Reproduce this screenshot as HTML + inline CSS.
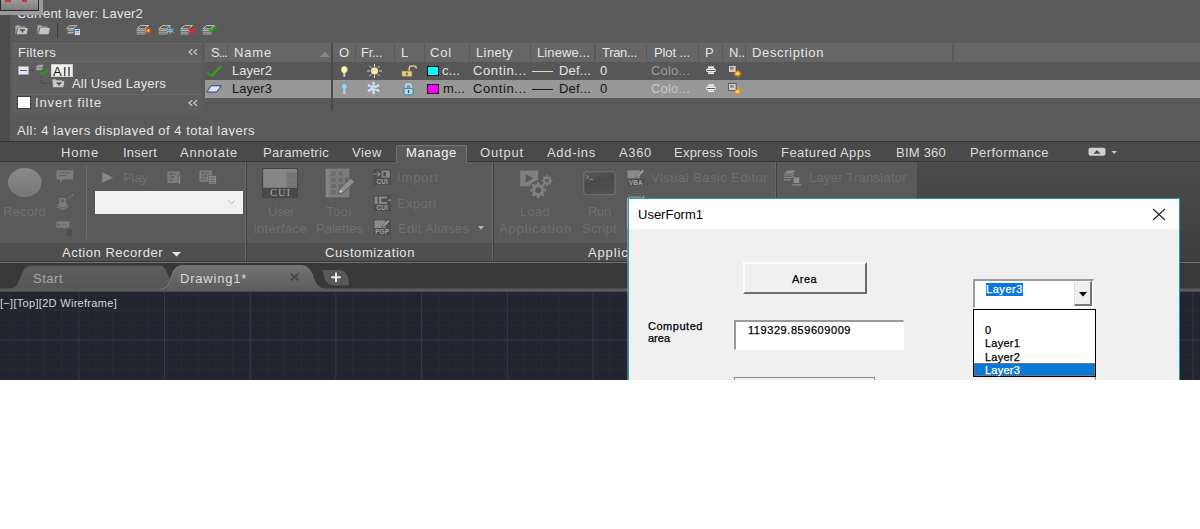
<!DOCTYPE html>
<html><head><meta charset="utf-8"><title>UserForm1</title>
<style>
html,body{margin:0;padding:0;background:#fff;}
body{width:1200px;height:529px;overflow:hidden;position:relative;font-family:"Liberation Sans",sans-serif;}
#shot{position:absolute;left:0;top:0;width:1200px;height:380px;overflow:hidden;background:#5a5a5a;}
.a{position:absolute;}
.t{position:absolute;white-space:nowrap;line-height:1;font-family:"Liberation Sans",sans-serif;}
#dlgt .t{-webkit-text-stroke:0.25px currentColor;}
svg{position:absolute;overflow:visible;}

</style></head><body>
<div id="shot">
<!-- palette -->
<div class="a" style="left:0;top:0;width:10px;height:141px;background:#4c4c4c"></div>
<!-- filters panel -->
<div class="a" style="left:12px;top:43px;width:190px;height:70px;background:#5e5e5e"></div>
<div class="a" style="left:12px;top:43px;width:190px;height:18.5px;background:#606060;box-sizing:border-box;border-top:1px solid #676767;border-bottom:1px solid #686868"></div>
<div class="a" style="left:12px;top:94px;width:190px;height:1px;background:#666"></div>
<!-- grid -->
<div class="a" style="left:205px;top:43px;width:995px;height:18.5px;background:#666"></div>
<div class="a" style="left:205px;top:61.5px;width:995px;height:18.5px;background:#575757"></div>
<div class="a" style="left:205px;top:80px;width:995px;height:18px;background:#979797"></div>
<!-- ribbon -->
<div class="a" style="left:0;top:141px;width:1200px;height:21px;background:#4a4a4a"></div>
<div class="a" style="left:0;top:141px;width:1200px;height:1.2px;background:#323232"></div>
<div class="a" style="left:0;top:160.5px;width:1200px;height:1.2px;background:#383838"></div>
<div class="a" style="left:0;top:162px;width:917px;height:82px;background:#5a5a5a"></div>
<div class="a" style="left:917px;top:161.5px;width:283px;height:100.5px;background:linear-gradient(#4b4b4b,#3e3e3e)"></div>
<div class="a" style="left:0;top:243px;width:917px;height:18px;background:#4f4f4f"></div>
<!-- file tabs -->
<div class="a" style="left:0;top:262px;width:1200px;height:30px;background:#383838"></div>
<!-- drawing -->
<div class="a" style="left:0;top:291.5px;width:1200px;height:88.5px;background:#20252f"></div>
<svg style="left:15px;top:25px" width="13" height="9.5" viewBox="0 0 13 9.5"><path d="M0.4 8.8 V1 Q0.4 0.3 1.2 0.3 H4.4 L5.4 1.4 H10.6 V2.8 H2.2 L1.2 8.8 Z" fill="#a9a9a4"/><path d="M2.7 3 H12.9 L11.6 9.2 H1.7 Z" fill="#c3c3bd"/><path d="M1.5 9 L2.5 3" stroke="#666" stroke-width="0.5" fill="none"/><path d="M4.8 4.3 H10 V5.5 H8.6 L8.2 6 V7.6 H6.6 V6 L6.2 5.5 H4.8 Z" fill="#484848"/></svg>
<svg style="left:37px;top:25px" width="13" height="9.5" viewBox="0 0 13 9.5"><path d="M0.4 8.8 V1 Q0.4 0.3 1.2 0.3 H4.4 L5.4 1.4 H10.6 V2.8 H2.2 L1.2 8.8 Z" fill="#a9a9a4"/><path d="M2.7 3 H12.9 L11.6 9.2 H1.7 Z" fill="#c3c3bd"/><path d="M1.5 9 L2.5 3" stroke="#666" stroke-width="0.5" fill="none"/></svg>
<div class="a" style="left:57.2px;top:22.7px;width:1.2px;height:15px;background:#3a3a3a"></div>
<svg style="left:66px;top:25px" width="15" height="11" viewBox="0 0 15 11"><path d="M3.5 0.6 H11 L8 3.4 H0.5 Z" fill="#6a6a6a" stroke="#bdbdbd" stroke-width="0.9"/><path d="M2.6 4.2 H8.5 L7 5.8 H0.8 Z" fill="#b5b5b5"/><path d="M2.6 6.8 H8.5 L7 8.6 H0.8 Z" fill="#b5b5b5"/><rect x="8.3" y="3.6" width="6.2" height="7" rx="0.6" fill="#f4f6fa" stroke="#3a4560" stroke-width="0.8"/><rect x="9.3" y="4.8" width="4.2" height="1.5" fill="#2f6fd0"/><rect x="9.3" y="7.2" width="4.2" height="1.2" fill="#9aa4b8"/><rect x="9.3" y="8.8" width="4.2" height="0.8" fill="#b8c0d0"/></svg>
<svg style="left:136px;top:25px" width="17" height="11" viewBox="0 0 17 11"><path d="M4.6 0.6 H12.4 L8.6 3.8 H0.8 Z" fill="#585858" stroke="#d2d2d2" stroke-width="0.9" stroke-linejoin="round"/><path d="M0.6 5.4 H8.6 L10 4.2" fill="none" stroke="#c8c8c8" stroke-width="0.9"/><path d="M0.6 7.2 H8.6 L10 6" fill="none" stroke="#c0c0c0" stroke-width="0.9"/><path d="M0.6 9 H8.6 L10 7.8" fill="none" stroke="#b4b4b4" stroke-width="0.9"/><g transform="translate(12.3,5.6)"><path d="M0 -3.3 L0.9 -1.5 L2.6 -2.4 L2 -0.6 L3.5 0 L2 0.7 L2.6 2.4 L0.9 1.6 L0 3.3 L-0.9 1.6 L-2.6 2.4 L-2 0.7 L-3.5 0 L-2 -0.6 L-2.6 -2.4 L-0.9 -1.5 Z" fill="#e2590c"/><circle r="1.3" fill="#f6c23a"/></g></svg>
<svg style="left:158.3px;top:25px" width="17" height="11" viewBox="0 0 17 11"><path d="M4.6 0.6 H12.4 L8.6 3.8 H0.8 Z" fill="#585858" stroke="#d2d2d2" stroke-width="0.9" stroke-linejoin="round"/><path d="M0.6 5.4 H8.6 L10 4.2" fill="none" stroke="#c8c8c8" stroke-width="0.9"/><path d="M0.6 7.2 H8.6 L10 6" fill="none" stroke="#c0c0c0" stroke-width="0.9"/><path d="M0.6 9 H8.6 L10 7.8" fill="none" stroke="#b4b4b4" stroke-width="0.9"/><g transform="translate(12.2,5.6)" stroke="#6fc3e3" stroke-width="1.1" stroke-linecap="round"><path d="M0 -3.2 V3.2 M-3 -1.7 L3 1.7 M-3 1.7 L3 -1.7"/></g></svg>
<svg style="left:180.3px;top:25px" width="17" height="11" viewBox="0 0 17 11"><path d="M4.6 0.6 H12.4 L8.6 3.8 H0.8 Z" fill="#585858" stroke="#d2d2d2" stroke-width="0.9" stroke-linejoin="round"/><path d="M0.6 5.4 H8.6 L10 4.2" fill="none" stroke="#c8c8c8" stroke-width="0.9"/><path d="M0.6 7.2 H8.6 L10 6" fill="none" stroke="#c0c0c0" stroke-width="0.9"/><path d="M0.6 9 H8.6 L10 7.8" fill="none" stroke="#b4b4b4" stroke-width="0.9"/><path d="M8.6 3.2 L15.2 8.4 M15.2 3.2 L8.6 8.4" stroke="#e8282e" stroke-width="1.9"/></svg>
<svg style="left:202px;top:25px" width="17" height="11" viewBox="0 0 17 11"><path d="M4.6 0.6 H12.4 L8.6 3.8 H0.8 Z" fill="#585858" stroke="#d2d2d2" stroke-width="0.9" stroke-linejoin="round"/><path d="M0.6 5.4 H8.6 L10 4.2" fill="none" stroke="#c8c8c8" stroke-width="0.9"/><path d="M0.6 7.2 H8.6 L10 6" fill="none" stroke="#c0c0c0" stroke-width="0.9"/><path d="M0.6 9 H8.6 L10 7.8" fill="none" stroke="#b4b4b4" stroke-width="0.9"/><path d="M7 4 L9.6 6.4 L14.6 0.6" stroke="#1fa30f" stroke-width="2" fill="none" stroke-linejoin="miter"/></svg>
<svg style="left:188px;top:48.5px" width="10" height="6" viewBox="0 0 10 6"><path d="M4.2 0.3 L1 3 L4.2 5.7 M9 0.3 L5.8 3 L9 5.7" fill="none" stroke="#c8c8c8" stroke-width="1.2"/></svg>
<svg style="left:188px;top:100px" width="10" height="6" viewBox="0 0 10 6"><path d="M4.2 0.3 L1 3 L4.2 5.7 M9 0.3 L5.8 3 L9 5.7" fill="none" stroke="#c8c8c8" stroke-width="1.2"/></svg>
<div class="a" style="left:18px;top:66.3px;width:11px;height:8.7px;background:#e6e6e6;box-sizing:border-box;border:1px solid #a4a4a4"></div>
<div class="a" style="left:20.3px;top:70px;width:6.6px;height:1.2px;background:#3f5fc4"></div>
<svg style="left:29px;top:64px" width="25" height="22" viewBox="0 0 25 22"><path d="M0.5 6.6 H5" stroke="#3c3c3c" stroke-width="1" stroke-dasharray="1 1" fill="none"/><path d="M12.3 12 V19 H23" stroke="#3c3c3c" stroke-width="1" stroke-dasharray="1 1" fill="none"/><path d="M9.4 1.3 H14.2 L12.2 3 H7.4 Z" fill="#7a7a7a" stroke="#d0d0d0" stroke-width="0.7"/><path d="M7.2 4.2 H12.4 L13.6 3.2 M7.2 5.6 H12.4 L13.6 4.6" stroke="#c4c4c4" stroke-width="0.8" fill="none"/><path d="M11 8.2 L13.4 10.6 L19.4 5.6" stroke="#1fa30f" stroke-width="1.8" fill="none"/></svg>
<div class="a" style="left:51px;top:63.8px;width:22.2px;height:13px;background:#f0f0f0;box-sizing:border-box;border:1px solid #cfcfcf"></div>
<svg style="left:52.3px;top:78.6px" width="12.6" height="8.4" viewBox="0 0 12.6 8.4"><path d="M0.4 1.8 V0.9 Q0.4 0.3 1 0.3 H4 L4.9 1.2 H10.2 V2.2 H12.2 L11 8 H1.1 Z" fill="#bdbdbd"/><path d="M2 2.6 H12.4 L11.2 8.2 H1.2 Z" fill="#cacaca"/><path d="M4.4 3.6 H9.6 V4.3 L7.7 5.3 V6.6 H6.3 V5.3 L4.4 4.3 Z" fill="#404040"/></svg>
<div class="a" style="left:16.5px;top:96.3px;width:14.5px;height:12.8px;background:#fff;box-sizing:border-box;border:1px solid #404040"></div>
<div class="a" style="left:226.9px;top:43.5px;width:1.2px;height:18px;background:#595959"></div>
<div class="a" style="left:355.0px;top:43.5px;width:1.2px;height:18px;background:#595959"></div>
<div class="a" style="left:394.0px;top:43.5px;width:1.2px;height:18px;background:#595959"></div>
<div class="a" style="left:423.79999999999995px;top:43.5px;width:1.2px;height:18px;background:#595959"></div>
<div class="a" style="left:468.79999999999995px;top:43.5px;width:1.2px;height:18px;background:#595959"></div>
<div class="a" style="left:530.1999999999999px;top:43.5px;width:1.2px;height:18px;background:#595959"></div>
<div class="a" style="left:594.4px;top:43.5px;width:1.2px;height:18px;background:#595959"></div>
<div class="a" style="left:646.0px;top:43.5px;width:1.2px;height:18px;background:#595959"></div>
<div class="a" style="left:697.6999999999999px;top:43.5px;width:1.2px;height:18px;background:#595959"></div>
<div class="a" style="left:721.9px;top:43.5px;width:1.2px;height:18px;background:#595959"></div>
<div class="a" style="left:744.9px;top:43.5px;width:1.2px;height:18px;background:#595959"></div>
<div class="a" style="left:952.4px;top:43.5px;width:1.2px;height:18px;background:#595959"></div>
<div class="a" style="left:331px;top:43px;width:2px;height:68px;background:#4a4a4a"></div>
<svg style="left:320px;top:50.5px" width="10" height="6" viewBox="0 0 10 6"><path d="M0 6 L5 0.5 L10 6 Z" fill="#8a8a8a"/></svg>
<svg style="left:205.5px;top:64.5px" width="16" height="13" viewBox="0 0 16 13"><path d="M1 7.6 L5.4 11.2 L15 1.6" stroke="#37a516" stroke-width="2.1" fill="none"/><path d="M1.2 8.6 L5.5 12" stroke="#1e6a0c" stroke-width="0.8" fill="none"/></svg>
<svg style="left:205.5px;top:84.5px" width="16" height="8" viewBox="0 0 16 8"><path d="M5.2 0.8 H15.2 L10.6 7 H0.8 Z" fill="#dfe7f6" stroke="#263f86" stroke-width="1"/></svg>
<svg style="left:340.8px;top:65.8px" width="6.6" height="11" viewBox="0 0 6.6 11"><ellipse cx="3.3" cy="3.6" rx="3" ry="3.4" fill="#fdfbb0" stroke="#c9c27a" stroke-width="0.5"/><path d="M2.3 6.6 H4.3 V10.6 H2.3 Z" fill="#e8e8e0"/><path d="M2.3 8.6 H4.3" stroke="#8a8a80" stroke-width="0.6"/></svg>
<svg style="left:340.5px;top:83px" width="6.6" height="11" viewBox="0 0 6.6 11"><ellipse cx="3.3" cy="3.6" rx="3" ry="3.4" fill="#9ecdea" stroke="#4a7fa6" stroke-width="0.6"/><path d="M2.3 6.6 H4.3 V10.6 H2.3 Z" fill="#e4ecf2"/><path d="M2.3 8.6 H4.3" stroke="#6a7a86" stroke-width="0.6"/></svg>
<svg style="left:366.5px;top:63.5px" width="15" height="14" viewBox="0 0 15 14"><g transform="translate(7.5,7)"><g stroke="#ecebe0" stroke-width="0.9" stroke-linecap="round"><path d="M0 -6.6 V-4.6 M0 6.6 V4.6 M-7 0 H-5 M7 0 H5 M-4.9 -4.9 L-3.5 -3.5 M4.9 4.9 L3.5 3.5 M-4.9 4.9 L-3.5 3.5 M4.9 -4.9 L3.5 -3.5"/></g><circle r="3.3" fill="#f7e6a8" stroke="#f4f0d8" stroke-width="0.6"/></g></svg>
<svg style="left:367.3px;top:82.2px" width="13" height="12" viewBox="0 0 13 12"><g transform="translate(6.5,6)" stroke="#e6f3fc" stroke-width="2.1" stroke-linecap="round"><path d="M0 -5.2 V5.2 M-4.8 -2.7 L4.8 2.7 M-4.8 2.7 L4.8 -2.7"/></g><g transform="translate(6.5,6)" stroke="#8ec4e6" stroke-width="0.6"><path d="M0 -5 V5 M-4.6 -2.6 L4.6 2.6 M-4.6 2.6 L4.6 -2.6"/></g></svg>
<svg style="left:401px;top:64.5px" width="17" height="12" viewBox="0 0 17 12"><path d="M8.2 6 V3.2 Q8.2 1 10.9 1 H12.6 Q15.4 1 15.4 3.4" fill="none" stroke="#d9c48a" stroke-width="1.5"/><rect x="0.8" y="6" width="10.2" height="5.4" rx="0.8" fill="#e3cd8f" stroke="#8a7338" stroke-width="0.7"/><rect x="5.2" y="7.4" width="1.3" height="2.8" fill="#5e4d22"/></svg>
<svg style="left:403px;top:82.9px" width="11" height="12.6" viewBox="0 0 11 13.4"><path d="M2.6 6 V3.8 Q2.6 1 5.5 1 Q8.4 1 8.4 3.8 V6" fill="none" stroke="#bfe2f2" stroke-width="1.6"/><rect x="0.7" y="5.8" width="9.6" height="6.8" rx="0.9" fill="#aedaee" stroke="#2f6f92" stroke-width="0.8"/><rect x="4.9" y="7.6" width="1.3" height="3.2" fill="#1e4f6e"/></svg>
<div class="a" style="left:427px;top:66px;width:11.8px;height:10.2px;background:#00ffff;box-sizing:border-box;border:1px solid #111"></div>
<div class="a" style="left:427px;top:84px;width:11.8px;height:10.2px;background:#ff00ff;box-sizing:border-box;border:1px solid #111"></div>
<div class="a" style="left:532px;top:71.3px;width:21px;height:1.2px;background:#dcdcdc"></div>
<div class="a" style="left:532px;top:89.3px;width:21px;height:1.2px;background:#1c1c1c"></div>
<svg style="left:705.5px;top:65.7px" width="10" height="8.4" viewBox="0 0 10 8.4"><rect x="2" y="0.3" width="6" height="2" fill="#e8e8e8"/><rect x="0.3" y="2.4" width="9.4" height="3.6" rx="1" fill="#f2f2f2"/><rect x="1" y="4" width="8" height="0.9" fill="#4a4a4a"/><rect x="2" y="6.2" width="6" height="1.9" fill="#e0e0e0"/></svg>
<svg style="left:705.5px;top:83.7px" width="10" height="8.4" viewBox="0 0 10 8.4"><rect x="2" y="0.3" width="6" height="2" fill="#e8e8e8"/><rect x="0.3" y="2.4" width="9.4" height="3.6" rx="1" fill="#f2f2f2"/><rect x="1" y="4" width="8" height="0.9" fill="#4a4a4a"/><rect x="2" y="6.2" width="6" height="1.9" fill="#e0e0e0"/></svg>
<svg style="left:728px;top:64.5px" width="14" height="13" viewBox="0 0 14 13"><rect x="0.5" y="0.5" width="7.6" height="7" fill="#d0d0d0" stroke="#4a4a4a" stroke-width="0.8"/><rect x="2" y="2" width="3.6" height="2.8" fill="#8a8a8a"/><g transform="translate(9.6,8.6)"><path d="M0 -4 L1 -1.9 L3 -2.9 L2.3 -0.8 L4.2 0 L2.3 0.9 L3 3 L1 2 L0 4 L-1 2 L-3 3 L-2.3 0.9 L-4.2 0 L-2.3 -0.8 L-3 -2.9 L-1 -1.9 Z" fill="#f39a12"/><circle r="1.7" fill="#fbd04a"/></g></svg>
<svg style="left:728px;top:82.5px" width="14" height="13" viewBox="0 0 14 13"><rect x="0.5" y="0.5" width="7.6" height="7" fill="#d0d0d0" stroke="#4a4a4a" stroke-width="0.8"/><rect x="2" y="2" width="3.6" height="2.8" fill="#8a8a8a"/><g transform="translate(9.6,8.6)"><path d="M0 -4 L1 -1.9 L3 -2.9 L2.3 -0.8 L4.2 0 L2.3 0.9 L3 3 L1 2 L0 4 L-1 2 L-3 3 L-2.3 0.9 L-4.2 0 L-2.3 -0.8 L-3 -2.9 L-1 -1.9 Z" fill="#f39a12"/><circle r="1.7" fill="#fbd04a"/></g></svg>
<div class="a" style="left:395.5px;top:144.5px;width:71px;height:18px;background:#5a5a5a;box-sizing:border-box;border:1px solid #747474;border-bottom:none;border-radius:2px 2px 0 0"></div>
<div class="a" style="left:245.3px;top:162px;width:1px;height:98.5px;background:#686868"></div>
<div class="a" style="left:246.3px;top:162px;width:1px;height:98.5px;background:#404040"></div>
<div class="a" style="left:492.2px;top:162px;width:1px;height:98.5px;background:#686868"></div>
<div class="a" style="left:493.2px;top:162px;width:1px;height:98.5px;background:#404040"></div>
<div class="a" style="left:775.4px;top:162px;width:1px;height:98.5px;background:#686868"></div>
<div class="a" style="left:776.4px;top:162px;width:1px;height:98.5px;background:#404040"></div>
<svg style="left:1088px;top:147px" width="30" height="10" viewBox="0 0 30 10"><rect x="0.5" y="0.8" width="17" height="8" rx="2" fill="#cfcfcf"/><path d="M5.4 6.8 L9 3 L12.6 6.8 Z" fill="#484848"/><path d="M23.5 4 H29 L26.2 7 Z" fill="#c4c4c4"/></svg>
<svg style="left:8px;top:168px" width="33.5" height="29" viewBox="0 0 33.5 29"><defs><linearGradient id="rg" x1="0" y1="0" x2="0" y2="1"><stop offset="0" stop-color="#8a8a8a"/><stop offset="1" stop-color="#777"/></linearGradient></defs><ellipse cx="16.75" cy="14.5" rx="16.75" ry="14.5" fill="url(#rg)"/></svg>
<svg style="left:56px;top:170px" width="18" height="14" viewBox="0 0 18 14"><path d="M0.5 0.3 H17.2 V9.4 H7 L4.2 13 V9.4 H0.5 Z" fill="#7e7e7e"/><path d="M2.6 3 H14.6 M2.6 5.6 H10.4" stroke="#5e5e5e" stroke-width="1"/></svg>
<svg style="left:56px;top:194px" width="19" height="17" viewBox="0 0 19 17"><path d="M1 11 L6.6 8.6 L12.4 11 L6.6 13.6 Z" fill="#7e7e7e"/><path d="M1 11.6 V13.6 L6.6 16.2 L12.4 13.6 V11.6 L6.6 14.2 Z" fill="#767676"/><path d="M3.4 4 H10 V10 H3.4 Z" fill="#7c7c7c"/><path d="M5 5.4 H8.4 V8 H5 Z" fill="#5a5a5a"/><path d="M11.4 5.6 L15.6 1.4" stroke="#727272" stroke-width="1"/><circle cx="16.4" cy="1" r="0.9" fill="#7a7a7a"/></svg>
<svg style="left:56px;top:220.5px" width="17" height="16" viewBox="0 0 17 16"><path d="M0.4 0.6 H13.2 V6.8 H9 L7.6 8.6 V6.8 H0.4 Z" fill="#7e7e7e"/><path d="M2 2.4 L4.4 3.8 L2 5.2 Z" fill="#5a5a5a"/><path d="M5.4 3.8 H11" stroke="#6a6a6a" stroke-width="1"/><rect x="10.4" y="8" width="5.6" height="7.4" fill="#4e4e4e"/></svg>
<div class="a" style="left:86px;top:165px;width:1.2px;height:74px;background:#6c6c6c"></div>
<svg style="left:102px;top:172px" width="11.5" height="11" viewBox="0 0 11.5 11"><path d="M0.3 0.3 L11.2 5.5 L0.3 10.7 Z" fill="#878787"/></svg>
<svg style="left:167px;top:171px" width="16" height="13.5" viewBox="0 0 16 13.5"><rect x="0.4" y="0.4" width="12.4" height="11.6" fill="#7e7e7e"/><path d="M2 3 H9 M2 6 H7 M2 9 H6" stroke="#5a5a5a" stroke-width="1"/><circle cx="4" cy="3" r="1" fill="#5a5a5a"/><circle cx="6" cy="6" r="1" fill="#5a5a5a"/><path d="M11.4 3.4 Q9.4 5.4 11.4 7 V13 H13.4 V7 Q15.4 5.4 13.4 3.4 V5.6 H11.4 Z" fill="#8c8c8c" stroke="#5a5a5a" stroke-width="0.5"/></svg>
<svg style="left:198.7px;top:170px" width="18" height="14.5" viewBox="0 0 18 14.5"><rect x="0.4" y="0.4" width="12.6" height="11.4" fill="#7e7e7e"/><path d="M2 3 H10 M2 6 H8 M2 9 H7" stroke="#5a5a5a" stroke-width="1"/><circle cx="4" cy="3" r="1" fill="#5a5a5a"/><circle cx="6.5" cy="6" r="1" fill="#5a5a5a"/><rect x="9.8" y="5.6" width="7.6" height="8.4" fill="#8c8c8c" stroke="#5a5a5a" stroke-width="0.7"/><path d="M11.2 8 H16 M11.2 10.4 H16 M11.2 12.4 H16" stroke="#5e5e5e" stroke-width="0.9"/></svg>
<div class="a" style="left:94.7px;top:190.8px;width:148.7px;height:23px;background:#f1f1f1"></div>
<svg style="left:227.5px;top:200px" width="7" height="4.5" viewBox="0 0 7 4.5"><path d="M0.4 0.4 L3.5 3.8 L6.6 0.4" fill="none" stroke="#b4b4b4" stroke-width="1"/></svg>
<svg style="left:172px;top:251.5px" width="9" height="5" viewBox="0 0 9 5"><path d="M0 0 H9 L4.5 4.6 Z" fill="#e4e4e4"/></svg>
<svg style="left:262.3px;top:167.7px" width="36" height="30" viewBox="0 0 36 30"><rect x="0.5" y="0.5" width="35" height="29" rx="1" fill="#7e7e7e" stroke="#474747" stroke-width="1.2"/><rect x="1.4" y="1.4" width="33.2" height="2.2" fill="#8a8a8a"/><rect x="1.8" y="4.2" width="22" height="15.4" fill="#868686"/><rect x="25" y="4.2" width="9.4" height="7" fill="#767676"/><rect x="25" y="12.2" width="9.4" height="7.4" fill="#767676"/><rect x="1" y="19.8" width="34" height="9.4" fill="#494949"/><text x="18.4" y="28.4" text-anchor="middle" font-family="Liberation Serif,serif" font-size="10.6" fill="#a6a6a6" letter-spacing="0.9">CUI</text></svg>
<svg style="left:325.3px;top:167.7px" width="30" height="30" viewBox="0 0 30 30"><rect x="0.5" y="0.5" width="24" height="29" fill="#7c7c7c" stroke="#676767" stroke-width="1"/><rect x="1" y="1" width="3" height="28" fill="#858585"/><rect x="6.2" y="3.6" width="4.4" height="4" fill="#6a6a6a"/><rect x="6.2" y="9.8" width="4.4" height="4" fill="#6a6a6a"/><rect x="6.2" y="16" width="4.4" height="4" fill="#6a6a6a"/><rect x="6.2" y="22.2" width="4.4" height="4" fill="#6a6a6a"/><rect x="13.4" y="3.6" width="4.4" height="4" fill="#6a6a6a"/><rect x="13.4" y="9.8" width="4.4" height="4" fill="#6a6a6a"/><rect x="13.4" y="16" width="4.4" height="4" fill="#6a6a6a"/><rect x="13.4" y="22.2" width="4.4" height="4" fill="#6a6a6a"/><rect x="20" y="9.4" width="3" height="5" fill="#646464"/><path d="M13.6 25.6 L14.8 20.4 L25.8 10.2 L29.6 14 L18.6 24.2 Z" fill="#8e8e8e" stroke="#5c5c5c" stroke-width="1"/><circle cx="15.8" cy="23.2" r="1.5" fill="#c4c4c4"/></svg>
<svg style="left:372.7px;top:169px" width="18.5" height="16.5" viewBox="0 0 18.5 16.5"><rect x="0.4" y="0.4" width="17.6" height="15.6" fill="#4e4e4e"/><rect x="8.6" y="1.6" width="8.2" height="7" fill="#8a8a8a"/><path d="M0 5 H6.4 M4.4 2.6 L7 5 L4.4 7.4" stroke="#8c8c8c" stroke-width="1.1" fill="none"/><rect x="10.4" y="3" width="2.4" height="4.4" fill="#4e4e4e"/><text x="9.2" y="15.2" text-anchor="middle" font-family="Liberation Sans,sans-serif" font-weight="bold" font-size="6.4" fill="#a2a2a2" letter-spacing="0.2">CUI</text></svg>
<svg style="left:372.7px;top:194.5px" width="18.5" height="16.5" viewBox="0 0 18.5 16.5"><rect x="0.4" y="0.4" width="17.6" height="15.6" fill="#4e4e4e"/><rect x="1.6" y="1.6" width="3" height="7.4" fill="#8a8a8a"/><path d="M6 1.6 H14 V3.6 H8.2 V7 H14 V9 H6 Z" fill="#8a8a8a"/><path d="M14.6 5.2 H18 " stroke="#8c8c8c" stroke-width="1.1"/><circle cx="17" cy="5.2" r="1" fill="#8a8a8a"/><text x="9.2" y="15.2" text-anchor="middle" font-family="Liberation Sans,sans-serif" font-weight="bold" font-size="6.4" fill="#a2a2a2" letter-spacing="0.2">CUI</text></svg>
<svg style="left:372.7px;top:219.4px" width="18.5" height="16.5" viewBox="0 0 18.5 16.5"><rect x="0.4" y="0.4" width="17.6" height="15.6" fill="#4e4e4e"/><rect x="1.4" y="1.4" width="11" height="7.6" fill="#8a8a8a"/><path d="M8.6 8.2 L10 5.6 L15 0.8 L16.8 2.6 L11.6 7.4 Z" fill="#9a9a9a" stroke="#4e4e4e" stroke-width="0.6"/><text x="9.2" y="15.2" text-anchor="middle" font-family="Liberation Sans,sans-serif" font-weight="bold" font-size="6.4" fill="#a2a2a2" letter-spacing="0.2">PGP</text></svg>
<svg style="left:478px;top:225.5px" width="6" height="4" viewBox="0 0 6 4"><path d="M0 0 H6 L3 3.6 Z" fill="#b8b8b8"/></svg>
<svg style="left:520px;top:169.5px" width="36" height="30" viewBox="0 0 36 30"><rect x="0.2" y="0.6" width="18" height="15.6" fill="#808080"/><path d="M5.6 4 L13.2 8.4 L5.6 12.8 Z" fill="#585858"/><circle cx="18.2" cy="20.2" r="9.6" fill="#5a5a5a"/><circle cx="27" cy="10.6" r="6.8" fill="#5a5a5a"/><path d="M26.35 19.30 L26.35 21.10 L23.96 21.87 L23.46 23.09 L24.60 25.33 L23.33 26.60 L21.09 25.46 L19.87 25.96 L19.10 28.35 L17.30 28.35 L16.53 25.96 L15.31 25.46 L13.07 26.60 L11.80 25.33 L12.94 23.09 L12.44 21.87 L10.05 21.10 L10.05 19.30 L12.44 18.53 L12.94 17.31 L11.80 15.07 L13.07 13.80 L15.31 14.94 L16.53 14.44 L17.30 12.05 L19.10 12.05 L19.87 14.44 L21.09 14.94 L23.33 13.80 L24.60 15.07 L23.46 17.31 L23.96 18.53 Z" fill="#7f7f7f"/><circle cx="18.2" cy="20.2" r="3" fill="#5a5a5a"/><path d="M32.57 9.99 L32.57 11.21 L30.84 11.72 L30.51 12.53 L31.37 14.10 L30.50 14.97 L28.93 14.11 L28.12 14.44 L27.61 16.17 L26.39 16.17 L25.88 14.44 L25.07 14.11 L23.50 14.97 L22.63 14.10 L23.49 12.53 L23.16 11.72 L21.43 11.21 L21.43 9.99 L23.16 9.48 L23.49 8.67 L22.63 7.10 L23.50 6.23 L25.07 7.09 L25.88 6.76 L26.39 5.03 L27.61 5.03 L28.12 6.76 L28.93 7.09 L30.50 6.23 L31.37 7.10 L30.51 8.67 L30.84 9.48 Z" fill="#7f7f7f"/><circle cx="27" cy="10.6" r="1.9" fill="#5a5a5a"/></svg>
<svg style="left:583px;top:171px" width="33" height="24.5" viewBox="0 0 33 24.5"><defs><linearGradient id="sg" x1="0" y1="0" x2="0.4" y2="1"><stop offset="0" stop-color="#5c5c5c"/><stop offset="0.5" stop-color="#4a4a4a"/><stop offset="1" stop-color="#505050"/></linearGradient></defs><rect x="0.7" y="0.7" width="31.4" height="23" rx="3" fill="url(#sg)" stroke="#6e6e6e" stroke-width="1.3"/><path d="M3.2 4.4 L5.8 6 L3.2 7.6 M6.6 8.4 H10" stroke="#8c8c8c" stroke-width="1" fill="none"/></svg>
<svg style="left:627.3px;top:169px" width="18.5" height="16.5" viewBox="0 0 18.5 16.5"><rect x="0.4" y="1.4" width="12.6" height="8" fill="#8a8a8a"/><path d="M8.6 8.6 L10 5.8 L15.4 0.6 L17.2 2.4 L11.8 7.6 Z" fill="#9a9a9a" stroke="#5a5a5a" stroke-width="0.6"/><rect x="0.4" y="9.8" width="17" height="6.4" fill="#4e4e4e"/><text x="8.9" y="15.6" text-anchor="middle" font-family="Liberation Sans,sans-serif" font-weight="bold" font-size="6.4" fill="#a2a2a2" letter-spacing="0.2">VBA</text></svg>
<svg style="left:628px;top:194.8px" width="18.5" height="16.5" viewBox="0 0 18.5 16.5"><rect x="0.4" y="1.4" width="12.6" height="8" fill="#8a8a8a"/><path d="M8.6 8.6 L10 5.8 L15.4 0.6 L17.2 2.4 L11.8 7.6 Z" fill="#9a9a9a" stroke="#5a5a5a" stroke-width="0.6"/><rect x="0.4" y="9.8" width="17" height="6.4" fill="#4e4e4e"/><text x="8.9" y="15.6" text-anchor="middle" font-family="Liberation Sans,sans-serif" font-weight="bold" font-size="6.4" fill="#a2a2a2" letter-spacing="0.2">VBA</text></svg>
<svg style="left:783px;top:169.5px" width="20" height="16" viewBox="0 0 20 16"><path d="M4.6 0.6 H12.6 L9.4 3.4 H1.4 Z" fill="#8a8a8a"/><path d="M1 5 H9.4 L11 3.8 M1 7.4 H9.4 L11 6.2 M1 9.8 H8" stroke="#8a8a8a" stroke-width="1.2" fill="none"/><rect x="10.6" y="7.4" width="5.6" height="5.6" fill="#8c8c8c"/><path d="M9.4 14.8 H18.6" stroke="#8a8a8a" stroke-width="1.2"/></svg>
<div class="a" style="left:0;top:260.5px;width:1200px;height:1.3px;background:#3a3a3a"></div>
<div class="a" style="left:0;top:261.8px;width:1200px;height:1.2px;background:#727272"></div>
<svg style="left:0px;top:262px" width="1200" height="30" viewBox="0 0 1200 30"><defs><linearGradient id="tg" x1="0" y1="0" x2="0" y2="1"><stop offset="0" stop-color="#747474"/><stop offset="1" stop-color="#5c5c5c"/></linearGradient><linearGradient id="tg2" x1="0" y1="0" x2="0" y2="1"><stop offset="0" stop-color="#5e5e5e"/><stop offset="1" stop-color="#565656"/></linearGradient></defs><rect x="0" y="26.4" width="1200" height="3.2" fill="#5a5a5a"/><path d="M0 27 L6 27 C16 27 18 22 21 14 C24 6 26 3.6 34 3.6 L158 3.6 C165 3.6 166 8 168.5 14 C171 21 173 27 180 27 Z" fill="url(#tg2)"/><path d="M160 27 C168 27 169 21 171.5 14 C174 7 176 3.6 184 3.6 L300 3.6 C308 3.6 310 8 313 14 C316 21 318 27 328 27 Z" fill="url(#tg)"/><path d="M160 27 C168 27 169 21 171.5 14 C174 7 176 3.6 184 3.6 L300 3.6 C308 3.6 310 8 313 14" fill="none" stroke="#7e7e7e" stroke-width="0.8"/><path d="M322.5 8 L338 8 C346 8 349 14 349 23.4 L334 23.4 C326 23.4 324 16 322.5 8 Z" fill="#595959"/><path d="M336 10.6 V20 M331.2 15.3 H340.8" stroke="#ececec" stroke-width="2"/><path d="M290.6 11.6 L298.6 18.4 M298.6 11.6 L290.6 18.4" stroke="#444" stroke-width="1.8"/></svg>
<svg style="left:0px;top:291.5px" width="1200" height="88.5" viewBox="0 0 1200 88.5"><path d="M10.2 0 V89" stroke="#272c37" stroke-width="1"/><path d="M27.4 0 V89" stroke="#272c37" stroke-width="1"/><path d="M44.5 0 V89" stroke="#272c37" stroke-width="1"/><path d="M61.7 0 V89" stroke="#272c37" stroke-width="1"/><path d="M78.8 0 V89" stroke="#333a48" stroke-width="1"/><path d="M95.9 0 V89" stroke="#272c37" stroke-width="1"/><path d="M113.1 0 V89" stroke="#272c37" stroke-width="1"/><path d="M130.2 0 V89" stroke="#272c37" stroke-width="1"/><path d="M147.4 0 V89" stroke="#272c37" stroke-width="1"/><path d="M164.5 0 V89" stroke="#333a48" stroke-width="1"/><path d="M181.6 0 V89" stroke="#272c37" stroke-width="1"/><path d="M198.8 0 V89" stroke="#272c37" stroke-width="1"/><path d="M215.9 0 V89" stroke="#272c37" stroke-width="1"/><path d="M233.1 0 V89" stroke="#272c37" stroke-width="1"/><path d="M250.2 0 V89" stroke="#333a48" stroke-width="1"/><path d="M267.3 0 V89" stroke="#272c37" stroke-width="1"/><path d="M284.5 0 V89" stroke="#272c37" stroke-width="1"/><path d="M301.6 0 V89" stroke="#272c37" stroke-width="1"/><path d="M318.8 0 V89" stroke="#272c37" stroke-width="1"/><path d="M335.9 0 V89" stroke="#333a48" stroke-width="1"/><path d="M353.0 0 V89" stroke="#272c37" stroke-width="1"/><path d="M370.2 0 V89" stroke="#272c37" stroke-width="1"/><path d="M387.3 0 V89" stroke="#272c37" stroke-width="1"/><path d="M404.5 0 V89" stroke="#272c37" stroke-width="1"/><path d="M421.6 0 V89" stroke="#333a48" stroke-width="1"/><path d="M438.7 0 V89" stroke="#272c37" stroke-width="1"/><path d="M455.9 0 V89" stroke="#272c37" stroke-width="1"/><path d="M473.0 0 V89" stroke="#272c37" stroke-width="1"/><path d="M490.2 0 V89" stroke="#272c37" stroke-width="1"/><path d="M507.3 0 V89" stroke="#333a48" stroke-width="1"/><path d="M524.4 0 V89" stroke="#272c37" stroke-width="1"/><path d="M541.6 0 V89" stroke="#272c37" stroke-width="1"/><path d="M558.7 0 V89" stroke="#272c37" stroke-width="1"/><path d="M575.9 0 V89" stroke="#272c37" stroke-width="1"/><path d="M593.0 0 V89" stroke="#333a48" stroke-width="1"/><path d="M610.1 0 V89" stroke="#272c37" stroke-width="1"/><path d="M627.3 0 V89" stroke="#272c37" stroke-width="1"/><path d="M644.4 0 V89" stroke="#272c37" stroke-width="1"/><path d="M661.6 0 V89" stroke="#272c37" stroke-width="1"/><path d="M678.7 0 V89" stroke="#333a48" stroke-width="1"/><path d="M695.8 0 V89" stroke="#272c37" stroke-width="1"/><path d="M713.0 0 V89" stroke="#272c37" stroke-width="1"/><path d="M730.1 0 V89" stroke="#272c37" stroke-width="1"/><path d="M747.3 0 V89" stroke="#272c37" stroke-width="1"/><path d="M764.4 0 V89" stroke="#333a48" stroke-width="1"/><path d="M781.5 0 V89" stroke="#272c37" stroke-width="1"/><path d="M798.7 0 V89" stroke="#272c37" stroke-width="1"/><path d="M815.8 0 V89" stroke="#272c37" stroke-width="1"/><path d="M833.0 0 V89" stroke="#272c37" stroke-width="1"/><path d="M850.1 0 V89" stroke="#333a48" stroke-width="1"/><path d="M867.2 0 V89" stroke="#272c37" stroke-width="1"/><path d="M884.4 0 V89" stroke="#272c37" stroke-width="1"/><path d="M901.5 0 V89" stroke="#272c37" stroke-width="1"/><path d="M918.7 0 V89" stroke="#272c37" stroke-width="1"/><path d="M935.8 0 V89" stroke="#333a48" stroke-width="1"/><path d="M952.9 0 V89" stroke="#272c37" stroke-width="1"/><path d="M970.1 0 V89" stroke="#272c37" stroke-width="1"/><path d="M987.2 0 V89" stroke="#272c37" stroke-width="1"/><path d="M1004.4 0 V89" stroke="#272c37" stroke-width="1"/><path d="M1021.5 0 V89" stroke="#333a48" stroke-width="1"/><path d="M1038.6 0 V89" stroke="#272c37" stroke-width="1"/><path d="M1055.8 0 V89" stroke="#272c37" stroke-width="1"/><path d="M1072.9 0 V89" stroke="#272c37" stroke-width="1"/><path d="M1090.1 0 V89" stroke="#272c37" stroke-width="1"/><path d="M1107.2 0 V89" stroke="#333a48" stroke-width="1"/><path d="M1124.3 0 V89" stroke="#272c37" stroke-width="1"/><path d="M1141.5 0 V89" stroke="#272c37" stroke-width="1"/><path d="M1158.6 0 V89" stroke="#272c37" stroke-width="1"/><path d="M1175.8 0 V89" stroke="#272c37" stroke-width="1"/><path d="M1192.9 0 V89" stroke="#333a48" stroke-width="1"/><path d="M0 3.8 H1200" stroke="#272c37" stroke-width="1"/><path d="M0 18.5 H1200" stroke="#272c37" stroke-width="1"/><path d="M0 33.2 H1200" stroke="#272c37" stroke-width="1"/><path d="M0 47.9 H1200" stroke="#333a48" stroke-width="1"/><path d="M0 62.6 H1200" stroke="#272c37" stroke-width="1"/><path d="M0 77.3 H1200" stroke="#272c37" stroke-width="1"/></svg>
<span class="t" style="left:17px;top:7.40px;font-size:13px;color:#e4e4e4;letter-spacing:0.185px;clip-path:inset(0 0 2.2px 0);">Current layer: Layer2</span>
<span class="t" style="left:18px;top:45.50px;font-size:13px;color:#e4e4e4;letter-spacing:0.373px;">Filters</span>
<span class="t" style="left:53px;top:65.00px;font-size:13px;color:#1a1a1a;letter-spacing:1.518px;">All</span>
<span class="t" style="left:72px;top:77.00px;font-size:13px;color:#e4e4e4;letter-spacing:0.197px;">All Used Layers</span>
<span class="t" style="left:35px;top:96.00px;font-size:13px;color:#e4e4e4;letter-spacing:0.887px;">Invert filte</span>
<span class="t" style="left:17px;top:124.20px;font-size:13px;color:#e4e4e4;letter-spacing:0.500px;clip-path:inset(0 0 1.2px 0);">All: 4 layers displayed of 4 total layers</span>
<span class="t" style="left:211px;top:45.60px;font-size:13px;color:#e4e4e4;letter-spacing:-0.877px;">S...</span>
<span class="t" style="left:234px;top:45.60px;font-size:13px;color:#e4e4e4;letter-spacing:0.831px;">Name</span>
<span class="t" style="left:339px;top:45.60px;font-size:13px;color:#e4e4e4;letter-spacing:-0.112px;">O</span>
<span class="t" style="left:361px;top:45.60px;font-size:13px;color:#e4e4e4;letter-spacing:-0.278px;">Fr...</span>
<span class="t" style="left:401px;top:45.60px;font-size:13px;color:#e4e4e4;letter-spacing:-1.230px;">L</span>
<span class="t" style="left:430px;top:45.60px;font-size:13px;color:#e4e4e4;letter-spacing:0.831px;">Col</span>
<span class="t" style="left:476px;top:45.60px;font-size:13px;color:#e4e4e4;letter-spacing:0.385px;">Linety</span>
<span class="t" style="left:537px;top:45.60px;font-size:13px;color:#e4e4e4;letter-spacing:0.108px;">Linewe...</span>
<span class="t" style="left:602px;top:45.60px;font-size:13px;color:#e4e4e4;letter-spacing:-0.298px;">Tran...</span>
<span class="t" style="left:654px;top:45.60px;font-size:13px;color:#e4e4e4;letter-spacing:-0.106px;">Plot ...</span>
<span class="t" style="left:705px;top:45.60px;font-size:13px;color:#e4e4e4;letter-spacing:-1.671px;">P</span>
<span class="t" style="left:729px;top:45.60px;font-size:13px;color:#e4e4e4;letter-spacing:-0.204px;">N..</span>
<span class="t" style="left:752px;top:45.60px;font-size:13px;color:#e4e4e4;letter-spacing:0.634px;">Description</span>
<span class="t" style="left:232px;top:64.00px;font-size:13px;color:#e4e4e4;letter-spacing:0.042px;">Layer2</span>
<span class="t" style="left:232px;top:82.00px;font-size:13px;color:#161616;letter-spacing:0.042px;">Layer3</span>
<span class="t" style="left:442px;top:64.00px;font-size:13px;color:#e4e4e4;letter-spacing:0.166px;">c...</span>
<span class="t" style="left:443px;top:82.00px;font-size:13px;color:#161616;letter-spacing:0.084px;">m...</span>
<span class="t" style="left:473px;top:64.00px;font-size:13px;color:#e4e4e4;letter-spacing:0.621px;">Contin...</span>
<span class="t" style="left:473px;top:82.00px;font-size:13px;color:#161616;letter-spacing:0.621px;">Contin...</span>
<span class="t" style="left:559px;top:64.00px;font-size:13px;color:#e4e4e4;letter-spacing:0.156px;">Def...</span>
<span class="t" style="left:559px;top:82.00px;font-size:13px;color:#161616;letter-spacing:0.156px;">Def...</span>
<span class="t" style="left:600px;top:64.00px;font-size:13px;color:#e4e4e4;letter-spacing:-0.230px;">0</span>
<span class="t" style="left:600px;top:82.00px;font-size:13px;color:#161616;letter-spacing:-0.230px;">0</span>
<span class="t" style="left:651px;top:64.00px;font-size:13px;color:#9c9c9c;letter-spacing:0.204px;">Colo...</span>
<span class="t" style="left:651px;top:82.00px;font-size:13px;color:#c8c8c8;letter-spacing:0.204px;">Colo...</span>
<span class="t" style="left:61px;top:145.50px;font-size:13px;color:#dcdcdc;letter-spacing:0.831px;">Home</span>
<span class="t" style="left:123px;top:145.50px;font-size:13px;color:#dcdcdc;letter-spacing:0.248px;">Insert</span>
<span class="t" style="left:180px;top:145.50px;font-size:13px;color:#dcdcdc;letter-spacing:0.744px;">Annotate</span>
<span class="t" style="left:263px;top:145.50px;font-size:13px;color:#dcdcdc;letter-spacing:0.315px;">Parametric</span>
<span class="t" style="left:352px;top:145.50px;font-size:13px;color:#dcdcdc;letter-spacing:0.514px;">View</span>
<span class="t" style="left:406px;top:145.50px;font-size:13px;color:#f4f4f4;letter-spacing:0.670px;">Manage</span>
<span class="t" style="left:480px;top:145.50px;font-size:13px;color:#dcdcdc;letter-spacing:0.829px;">Output</span>
<span class="t" style="left:547px;top:145.50px;font-size:13px;color:#dcdcdc;letter-spacing:0.703px;">Add-ins</span>
<span class="t" style="left:619px;top:145.50px;font-size:13px;color:#dcdcdc;letter-spacing:0.660px;">A360</span>
<span class="t" style="left:674px;top:145.50px;font-size:13px;color:#dcdcdc;letter-spacing:0.237px;">Express Tools</span>
<span class="t" style="left:781px;top:145.50px;font-size:13px;color:#dcdcdc;letter-spacing:0.440px;">Featured Apps</span>
<span class="t" style="left:896px;top:145.50px;font-size:13px;color:#dcdcdc;letter-spacing:0.227px;">BIM 360</span>
<span class="t" style="left:970px;top:145.50px;font-size:13px;color:#dcdcdc;letter-spacing:0.416px;">Performance</span>
<span class="t" style="left:3px;top:205.00px;font-size:13px;color:#6e6e6e;letter-spacing:0.182px;">Record</span>
<span class="t" style="left:123px;top:171.00px;font-size:13px;color:#6e6e6e;letter-spacing:-0.072px;">Play</span>
<span class="t" style="left:268px;top:205.00px;font-size:13px;color:#6e6e6e;letter-spacing:-0.362px;">User</span>
<span class="t" style="left:253px;top:221.50px;font-size:13px;color:#6e6e6e;letter-spacing:0.380px;">Interface</span>
<span class="t" style="left:326px;top:205.00px;font-size:13px;color:#6e6e6e;letter-spacing:0.538px;">Tool</span>
<span class="t" style="left:316px;top:221.50px;font-size:13px;color:#6e6e6e;letter-spacing:0.003px;">Palettes</span>
<span class="t" style="left:397px;top:171.20px;font-size:13px;color:#6e6e6e;letter-spacing:0.860px;">Import</span>
<span class="t" style="left:397px;top:196.80px;font-size:13px;color:#6e6e6e;letter-spacing:0.405px;">Export</span>
<span class="t" style="left:398px;top:222.00px;font-size:13px;color:#6e6e6e;letter-spacing:0.340px;">Edit Aliases</span>
<span class="t" style="left:520px;top:205.00px;font-size:13px;color:#6e6e6e;letter-spacing:0.270px;">Load</span>
<span class="t" style="left:499px;top:221.50px;font-size:13px;color:#6e6e6e;letter-spacing:0.855px;">Application</span>
<span class="t" style="left:588px;top:205.00px;font-size:13px;color:#6e6e6e;letter-spacing:-0.283px;">Run</span>
<span class="t" style="left:582px;top:221.50px;font-size:13px;color:#6e6e6e;letter-spacing:0.295px;">Script</span>
<span class="t" style="left:651px;top:171.00px;font-size:13px;color:#6e6e6e;letter-spacing:0.466px;">Visual Basic Editor</span>
<span class="t" style="left:809px;top:171.00px;font-size:13px;color:#6e6e6e;letter-spacing:0.240px;">Layer Translator</span>
<span class="t" style="left:62px;top:246.00px;font-size:13px;color:#e4e4e4;letter-spacing:0.519px;">Action Recorder</span>
<span class="t" style="left:325px;top:246.00px;font-size:13px;color:#e4e4e4;letter-spacing:0.587px;">Customization</span>
<span class="t" style="left:588px;top:246.00px;font-size:13px;color:#e4e4e4;letter-spacing:0.855px;">Application</span>
<span class="t" style="left:33px;top:272.00px;font-size:13px;color:#a8a8a8;letter-spacing:0.509px;">Start</span>
<span class="t" style="left:180px;top:272.00px;font-size:13px;color:#d8d8d8;letter-spacing:0.781px;">Drawing1*</span>
<span class="t" style="left:0px;top:297.69px;font-size:11px;color:#d6d6d6;letter-spacing:0.303px;">[−][Top][2D Wireframe]</span>
<div class="a" style="left:0;top:0;width:43px;height:14.5px;background:#9a9a9a"></div>
<div class="a" style="left:0;top:0;width:39px;height:11px;background:#2a2a2a"></div>
<div class="a" style="left:1px;top:0;width:37px;height:10px;background:linear-gradient(#9a9a9a,#7c7c7c)"></div>
<div class="a" style="left:5px;top:0;width:6px;height:1.5px;background:#c8383a"></div>
<div class="a" style="left:22px;top:0;width:5px;height:1.5px;background:#c8383a"></div>
<div id="dlg" class="a" style="left:627px;top:198px;width:553px;height:182px;background:#f0f0f0;z-index:5;clip-path:inset(0 0 0 0.7px)">
<div class="a" style="left:0;top:0;width:553px;height:31px;background:#fff"></div>
<div class="a" style="left:0;top:0;width:553px;height:1px;background:#259eac"></div>
<div class="a" style="left:0.7px;top:0;width:1.4px;height:182px;background:#259eac"></div>
<div class="a" style="left:551.7px;top:0;width:1.3px;height:182px;background:#259eac"></div>
<svg style="left:526px;top:10.5px" width="12" height="11" viewBox="0 0 12 11"><path d="M0 0L12 11M12 0L0 11" stroke="#222" stroke-width="1.1" fill="none"/></svg>
<!-- Area button -->
<div class="a" style="left:116px;top:64px;width:123.5px;height:31.5px;background:#f0f0f0;box-sizing:border-box;border-top:2px solid #fff;border-left:2px solid #fff;border-right:2px solid #6e6e6e;border-bottom:2px solid #6e6e6e"></div>
<!-- textbox -->
<div class="a" style="left:107px;top:121.5px;width:170px;height:30.5px;background:#fff;box-sizing:border-box;border-top:2px solid #9a9a9a;border-left:2px solid #9a9a9a;border-right:1.5px solid #fdfdfd;border-bottom:1.5px solid #fdfdfd"></div>
<!-- next control (cut) -->
<div class="a" style="left:107px;top:178.5px;width:141px;height:10px;background:#f0f0f0;box-sizing:border-box;border-top:1.5px solid #8a8a8a;border-left:1.5px solid #8a8a8a;border-right:1.5px solid #8a8a8a"></div>
<!-- combo -->
<div class="a" style="left:345.5px;top:80.5px;width:121px;height:29px;background:#fff;box-sizing:border-box;border-top:2px solid #9a9a9a;border-left:2px solid #9a9a9a;border-right:1.5px solid #fdfdfd;border-bottom:1.5px solid #fdfdfd"></div>
<div class="a" style="left:446.5px;top:83px;width:18.5px;height:25px;background:#f0f0f0;box-sizing:border-box;border-top:1px solid #fff;border-left:1px solid #e0e0e0;border-right:2px solid #777;border-bottom:2px solid #777"></div>
<svg style="left:452px;top:94px" width="8" height="4.5" viewBox="0 0 8 4.5"><path d="M0 0H8L4 4.5Z" fill="#000"/></svg>
<div class="a" style="left:359px;top:84.5px;width:37px;height:13px;background:#0a78d7"></div>
<!-- list -->
<div class="a" style="left:345.5px;top:111.2px;width:123.5px;height:67.5px;background:#fff;box-sizing:border-box;border:1px solid #000;border-right:1.6px solid #000"></div>
<div class="a" style="left:346.5px;top:165px;width:121px;height:13px;background:#0a78d7;outline:1px dotted #c87820;outline-offset:-1px"></div>
<div class="a" style="left:467.5px;top:178.7px;width:1.5px;height:4px;background:#8a8a8a"></div>
</div>
<div id="dlgt" class="a" style="left:0;top:0;z-index:6">
<span class="t" style="left:638px;top:208.00px;font-size:13px;color:#000;letter-spacing:-0.001px;-webkit-text-stroke:0;">UserForm1</span>
<span class="t" style="left:792px;top:273.69px;font-size:11px;color:#000;letter-spacing:0.441px;">Area</span>
<span class="t" style="left:648px;top:320.69px;font-size:11px;color:#000;letter-spacing:0.531px;">Computed</span>
<span class="t" style="left:648px;top:332.69px;font-size:11px;color:#000;letter-spacing:-0.004px;">area</span>
<span class="t" style="left:748px;top:324.69px;font-size:11px;color:#000;letter-spacing:0.562px;">119329.859609009</span>
<span class="t" style="left:986px;top:283.69px;font-size:11px;color:#fff;letter-spacing:0.561px;">Layer3</span>
<span class="t" style="left:985px;top:324.69px;font-size:11px;color:#000;letter-spacing:-0.118px;">0</span>
<span class="t" style="left:985px;top:338.19px;font-size:11px;color:#000;letter-spacing:0.228px;">Layer1</span>
<span class="t" style="left:985px;top:351.69px;font-size:11px;color:#000;letter-spacing:0.228px;">Layer2</span>
<span class="t" style="left:985px;top:364.69px;font-size:11px;color:#fff;letter-spacing:0.228px;">Layer3</span>
</div>
</div>

</body></html>
